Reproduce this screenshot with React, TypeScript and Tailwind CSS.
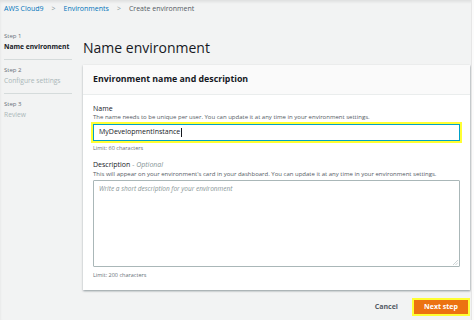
import React from "react";

const font = { fontFamily: '"Open Sans", "Noto Sans", Arial, sans-serif' };

function Crumbs() {
  return (
    <div className="flex items-center h-[19px] pl-[4px] text-[7px] gap-[8px]">
      <span className="text-[#0073bb]">AWS Cloud9</span>
      <span className="text-[#879596]">&gt;</span>
      <span className="text-[#0073bb]">Environments</span>
      <span className="text-[#879596]">&gt;</span>
      <span className="text-[#545b64]">Create environment</span>
    </div>
  );
}

function Steps() {
  const steps = [
    { n: "Step 1", label: "Name environment", active: true },
    { n: "Step 2", label: "Configure settings", active: false },
    { n: "Step 3", label: "Review", active: false },
  ];
  return (
    <div className="w-[68px] ml-[4px] shrink-0">
      {steps.map((s, i) => (
        <div
          key={s.n}
          className={
            "pt-[5px] pb-[6px] " + (i < 2 ? "border-b border-[#d5dbdb]" : "")
          }
        >
          <p className="text-[6px] leading-[10px] text-[#687078]">{s.n}</p>
          <p
            className={
              "text-[6.7px] leading-[12px] whitespace-nowrap " +
              (s.active ? "font-bold text-[#16191f]" : "text-[#aab7b8]")
            }
          >
            {s.label}
          </p>
        </div>
      ))}
    </div>
  );
}

export default function App() {
  return (
    <div
      className="w-[474px] h-[320px] bg-[#f2f3f3] overflow-hidden relative shadow-[inset_0_2px_3px_rgba(0,0,0,0.08)]"
      style={font}
    >
      <Crumbs />
      <div className="flex mt-[7px]">
        <Steps />
        <div className="flex-1 ml-[11px] mr-[4px] pt-[12px]">
          <h1 className="text-[14px] leading-[20px] text-[#16191f]">
            Name environment
          </h1>
          <div className="mt-[7px] bg-white shadow-[0_1px_2px_rgba(0,28,36,0.3),1px_1px_2px_rgba(0,28,36,0.15)]">
            <div className="h-[30px] pt-[1px] flex items-center px-[10px] bg-[#fafafa] border-b border-[#eaeded]">
              <h2 className="text-[8.8px] font-bold text-[#16191f]">
                Environment name and description
              </h2>
            </div>
            <div className="px-[10px] pt-[9px] pb-[10px]">
              <p className="text-[7px] leading-[9px] text-[#16191f]">Name</p>
              <p className="text-[6px] leading-[8px] mb-[1px] text-[#545b64]">
                The name needs to be unique per user. You can update it at any
                time in your environment settings.
              </p>
              <div className="-mx-[2px] p-[2px] bg-[#ffff33]">
                <div className="h-[17px] bg-white border border-[#00a1c9] flex items-center px-[5px] text-[7px] text-[#16191f]">
                  MyDevelopmentInstance
                  <span className="inline-block w-px h-[9px] bg-[#16191f] ml-[1px]" />
                </div>
              </div>
              <p className="text-[5.5px] leading-[9px] mt-[1px] text-[#687078]">
                Limit: 60 characters
              </p>
              <p className="text-[7px] leading-[9px] mt-[7px] text-[#16191f]">
                Description{" "}
                <span className="italic text-[#879596]">- Optional</span>
              </p>
              <p className="text-[6px] leading-[10px] text-[#545b64]">
                This will appear on your environment's card in your dashboard.
                You can update it at any time in your environment settings.
              </p>
              <div className="relative mt-[1px] h-[87px] border border-[#aab7b8] rounded-[1px] px-[5px] pt-[3px]">
                <p className="italic text-[6.5px] text-[#879596]">
                  Write a short description for your environment
                </p>
                <svg
                  className="absolute right-[1px] bottom-[1px]"
                  width="5"
                  height="5"
                  viewBox="0 0 5 5"
                >
                  <path d="M5 0L0 5M5 2.5L2.5 5" stroke="#aab7b8" strokeWidth="0.6" />
                </svg>
              </div>
              <p className="text-[5.5px] leading-[9px] mt-[4px] text-[#687078]">
                Limit: 200 characters
              </p>
            </div>
          </div>
          <div className="flex justify-end items-center mt-[8px] gap-[14px]">
            <span className="text-[7px] font-bold text-[#545b64]">Cancel</span>
            <div className="p-[2px] bg-[#ffff33]">
              <div className="h-[14px] w-[54px] bg-[#ec7211] flex items-center justify-center text-[7px] font-bold text-white">
                Next step
              </div>
            </div>
          </div>
        </div>
      </div>
      <div className="absolute right-0 top-0 bottom-0 w-[3px] bg-[#fbfbfb] border-l border-[#e6e6e6]" />
    </div>
  );
}
